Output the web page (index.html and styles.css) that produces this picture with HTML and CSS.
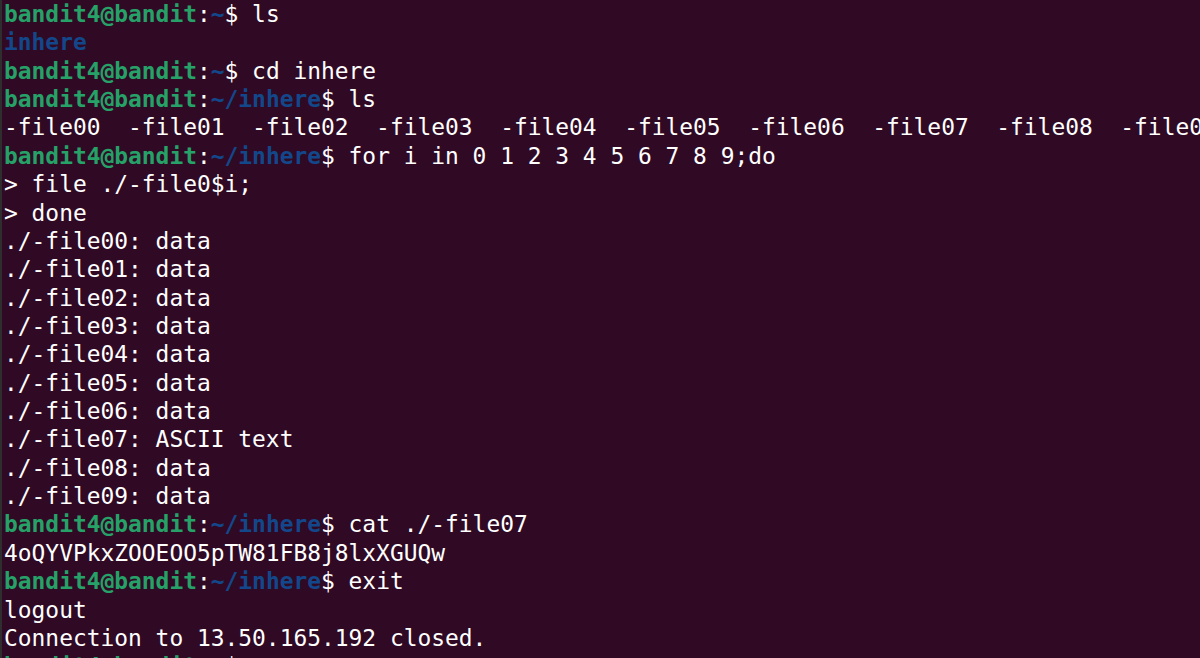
FILE: index.html
```html
<!DOCTYPE html>
<html>
<head>
<meta charset="utf-8">
<link rel="stylesheet" href="styles.css">
</head>
<body>
<div class="term">
<div class="ln"><span class="u">bandit4@bandit</span>:<span class="p">~</span>$ ls</div>
<div class="ln"><span class="p">inhere</span></div>
<div class="ln"><span class="u">bandit4@bandit</span>:<span class="p">~</span>$ cd inhere</div>
<div class="ln"><span class="u">bandit4@bandit</span>:<span class="p">~/inhere</span>$ ls</div>
<div class="ln">-file00  -file01  -file02  -file03  -file04  -file05  -file06  -file07  -file08  -file09</div>
<div class="ln"><span class="u">bandit4@bandit</span>:<span class="p">~/inhere</span>$ for i in 0 1 2 3 4 5 6 7 8 9;do</div>
<div class="ln">&gt; file ./-file0$i;</div>
<div class="ln">&gt; done</div>
<div class="ln">./-file00: data</div>
<div class="ln">./-file01: data</div>
<div class="ln">./-file02: data</div>
<div class="ln">./-file03: data</div>
<div class="ln">./-file04: data</div>
<div class="ln">./-file05: data</div>
<div class="ln">./-file06: data</div>
<div class="ln">./-file07: ASCII text</div>
<div class="ln">./-file08: data</div>
<div class="ln">./-file09: data</div>
<div class="ln"><span class="u">bandit4@bandit</span>:<span class="p">~/inhere</span>$ cat ./-file07</div>
<div class="ln">4oQYVPkxZOOEOO5pTW81FB8j8lxXGUQw</div>
<div class="ln"><span class="u">bandit4@bandit</span>:<span class="p">~/inhere</span>$ exit</div>
<div class="ln">logout</div>
<div class="ln">Connection to 13.50.165.192 closed.</div>
<div class="ln"><span class="u">bandit4@bandit</span>:<span class="p">~</span>$ </div>
</div>
</body>
</html>
```
FILE: styles.css
```css
html, body {
  margin: 0;
  padding: 0;
  background: #300a24;
  overflow: hidden;
}
.term {
  width: 1200px;
  height: 658px;
  box-sizing: border-box;
  border-left: 2px solid #2e2e2e;
  padding-left: 2px;
  background: #300a24;
  color: #ffffff;
  font-family: "DejaVu Sans Mono", monospace;
  font-size: 22.9px;
  line-height: 28.36px;
  overflow: hidden;
}
.ln {
  white-space: pre;
  height: 28.36px;
}
.u {
  color: #26a269;
  font-weight: bold;
}
.p {
  color: #12488b;
  font-weight: bold;
}
```
